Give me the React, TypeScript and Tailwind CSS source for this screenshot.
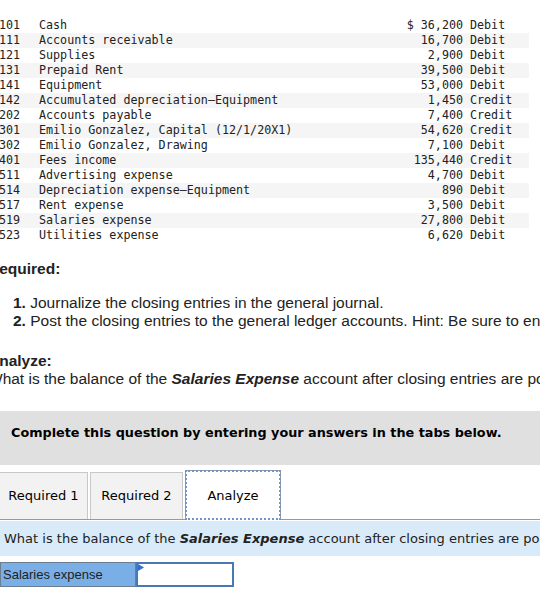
const rows: [string, string, string, string][] = [
  ["101", "Cash", "$ 36,200", "Debit"],
  ["111", "Accounts receivable", "16,700", "Debit"],
  ["121", "Supplies", "2,900", "Debit"],
  ["131", "Prepaid Rent", "39,500", "Debit"],
  ["141", "Equipment", "53,000", "Debit"],
  ["142", "Accumulated depreciation—Equipment", "1,450", "Credit"],
  ["202", "Accounts payable", "7,400", "Credit"],
  ["301", "Emilio Gonzalez, Capital (12/1/20X1)", "54,620", "Credit"],
  ["302", "Emilio Gonzalez, Drawing", "7,100", "Debit"],
  ["401", "Fees income", "135,440", "Credit"],
  ["511", "Advertising expense", "4,700", "Debit"],
  ["514", "Depreciation expense—Equipment", "890", "Debit"],
  ["517", "Rent expense", "3,500", "Debit"],
  ["519", "Salaries expense", "27,800", "Debit"],
  ["523", "Utilities expense", "6,620", "Debit"],
];

const mono = "font-['DejaVu_Sans_Mono','Liberation_Mono',monospace]";
const body = "font-['Liberation_Sans',Arial,sans-serif]";
const verdana = "font-['DejaVu_Sans',Verdana,sans-serif]";

function Tab({ label, active }: { label: string; active?: boolean }) {
  if (active) {
    return (
      <div className="relative -mb-px h-[50px] w-[96px] bg-white outline-2 outline-dotted outline-[#6f95c9] -outline-offset-2 border border-b-0 border-[#999] flex items-center justify-center text-[13px] text-black">
        {label}
      </div>
    );
  }
  return (
    <div className="h-[47px] border border-b-0 border-[#c8c8c8] bg-[#f2f2f2] flex items-center justify-center text-[13px] text-black">
      {label}
    </div>
  );
}

export default function App() {
  return (
    <div className="w-[540px] h-[590px] overflow-hidden bg-white text-[#222]">
      <div className={`${mono} text-[11.7px] leading-[15px] pt-[18px] w-[530px] -ml-[1px]`}>
        {rows.map(([no, name, amt, type], i) => (
          <div key={no} className={`flex h-[15px] ${i % 2 === 1 ? "bg-[#f5f5f5]" : ""}`}>
            <span className="w-[40px] shrink-0">{no}</span>
            <span className="flex-1 whitespace-nowrap">{name}</span>
            <span className="w-[100px] text-right pr-[7px] whitespace-nowrap">{amt}</span>
            <span className="w-[59px]">{type}</span>
          </div>
        ))}
      </div>

      <div className={`${body} -ml-[12px] text-[15.5px] text-[#222] whitespace-nowrap`}>
        <div className="mt-[17px] font-bold leading-[18px]">Required:</div>
        <div className="mt-[16px] pl-[25px] leading-[18px]">
          <div>
            <span className="font-bold">1.</span> Journalize the closing entries in the general journal.
          </div>
          <div>
            <span className="font-bold">2.</span> Post the closing entries to the general ledger accounts. Hint: Be sure to enter the ending balances.
          </div>
        </div>
        <div className="mt-[22px] font-bold leading-[18px]">Analyze:</div>
        <div className="leading-[18px]">
          What is the balance of the <span className="font-bold italic">Salaries Expense</span> account after closing entries are posted?
        </div>
      </div>

      <div className={`${verdana} mt-[23px] h-[54px] bg-[#e0e0e0] pt-[14px] px-[11px] text-[12.8px] leading-[16px] font-bold text-black whitespace-nowrap`}>
        Complete this question by entering your answers in the tabs below.
      </div>

      <div className={`${verdana} mt-[6px]`}>
        <div className="flex items-end gap-[2px] border-b border-[#999] h-[49px] -ml-px">
          <div className="w-[89px]"><Tab label="Required 1" /></div>
          <div className="w-[93px]"><Tab label="Required 2" /></div>
          <Tab label="Analyze" active />
        </div>
        <div className="mt-px h-[35px] bg-[#d9ebf9] flex items-center px-[4px] pt-[1px] text-[13px] text-[#222] whitespace-nowrap">
          What is the balance of the&nbsp;<span className="font-bold italic">Salaries Expense</span>&nbsp;account after closing entries are posted?
        </div>
        <div className="mt-[6px] flex h-[25px]">
          <div className={`${body} w-[136px] bg-[#7aaee6] border border-[#6b7d91] flex items-center pl-[2px] text-[13px] text-[#222]`}>
            Salaries expense
          </div>
          <div className="relative w-[98px] bg-white border-2 border-[#4a78b0]">
            <svg className="absolute left-0 top-0" width="6" height="7" viewBox="0 0 6 7">
              <path d="M0 0 L6 3.5 L0 7 Z" fill="#2f6fd0" />
            </svg>
          </div>
        </div>
      </div>
    </div>
  );
}
